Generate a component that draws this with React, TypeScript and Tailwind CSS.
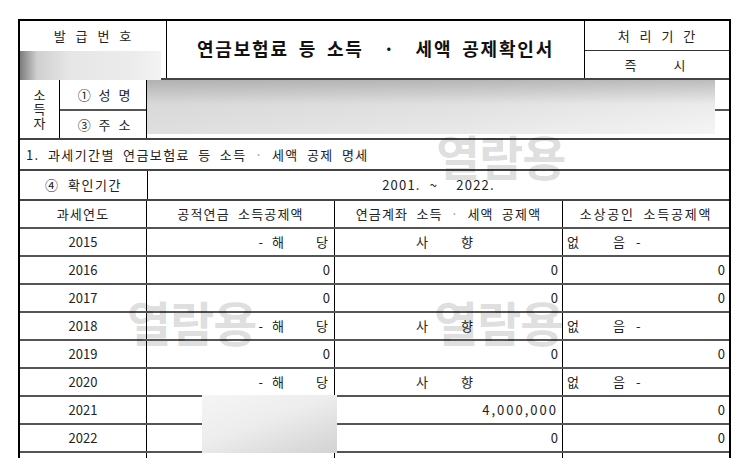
type Cell = "none" | "dang" | "hang" | "eum" | string;

const rows: { year: string; a: Cell; b: Cell; c: Cell }[] = [
  { year: "2015", a: "dang", b: "hang", c: "eum" },
  { year: "2016", a: "0", b: "0", c: "0" },
  { year: "2017", a: "0", b: "0", c: "0" },
  { year: "2018", a: "dang", b: "hang", c: "eum" },
  { year: "2019", a: "0", b: "0", c: "0" },
  { year: "2020", a: "dang", b: "hang", c: "eum" },
  { year: "2021", a: "none", b: "4,000,000", c: "0" },
  { year: "2022", a: "none", b: "0", c: "0" },
];

// "- 해 당 사 항 없 음 -" spread over the three amount columns
function Value({ v }: { v: Cell }) {
  if (v === "none") return null;
  if (v === "dang")
    return (
      <div className="flex h-full items-center justify-end pr-[6px]">
        <span>-</span>
        <span className="ml-[9px]">해</span>
        <span className="ml-[32px]">당</span>
      </div>
    );
  if (v === "hang")
    return (
      <div className="flex h-full items-center justify-center pr-[8px]">
        <span>사</span>
        <span className="ml-[33px]">향</span>
      </div>
    );
  if (v === "eum")
    return (
      <div className="flex h-full items-center pl-[4px]">
        <span>없</span>
        <span className="ml-[34px]">음</span>
        <span className="ml-[11px]">-</span>
      </div>
    );
  return (
    <div className={`flex h-full items-center justify-end pr-[4px] ${v.length > 3 ? "tracking-[2px]" : ""}`}>
      {v}
    </div>
  );
}

function Watermark({ className }: { className: string }) {
  return (
    <div
      className={`pointer-events-none absolute z-10 text-[48px] font-bold leading-none tracking-[-1px] text-[rgba(0,0,0,0.15)] ${className}`}
    >
      열람용
    </div>
  );
}

export default function App() {
  return (
    <div className="relative h-[458px] w-[743px] overflow-hidden bg-white pl-[18px] pt-[19px] font-['Noto_Sans_CJK_KR',sans-serif] text-[13px] text-[#222]">
      <div className="w-[713px] border-x-2 border-t-2 border-black">
        {/* header */}
        <div className="flex h-[59px] border-b-2 border-[#444]">
          <div className="flex w-[147px] flex-col border-r border-black">
            <div className="flex h-[30px] items-center justify-center whitespace-pre tracking-[1px] [word-spacing:5px]">발 급 번 호</div>
            <div className="flex-1" />
          </div>
          <div className="flex w-[418px] items-center justify-center whitespace-pre border-r border-black pb-[2px] text-[18px] font-bold tracking-[1.8px] text-[#111] [word-spacing:4px]">
            연금보험료 등 소득  ·  세액 공제확인서
          </div>
          <div className="flex flex-1 flex-col">
            <div className="flex h-[30px] items-center justify-center whitespace-pre border-b border-[#333] tracking-[1px] [word-spacing:5px]">처 리 기 간</div>
            <div className="flex flex-1 items-center justify-center pr-[4px]">
              <span>즉</span>
              <span className="ml-[37px]">시</span>
            </div>
          </div>
        </div>

        {/* 소득자 */}
        <div className="flex h-[60px] border-b-2 border-[#444]">
          <div className="flex w-[40px] flex-col items-center justify-center border-r border-black leading-[14px]">
            <span>소</span>
            <span>득</span>
            <span>자</span>
          </div>
          <div className="flex w-[87px] flex-col border-r border-black">
            <div className="flex h-[31px] items-center justify-center whitespace-pre border-b-2 border-[#555] pl-[3px] tracking-[1px] [word-spacing:3px]">① 성 명</div>
            <div className="flex flex-1 items-center justify-center whitespace-pre pl-[3px] tracking-[1px] [word-spacing:3px]">③ 주 소</div>
          </div>
          <div className="flex flex-1 flex-col">
            <div className="h-[31px] border-b-2 border-[#555]" />
            <div className="flex-1" />
          </div>
        </div>

        {/* section title */}
        <div className="flex h-[31px] items-center whitespace-pre border-b-2 border-[#444] pl-[6px] tracking-[1.4px] [word-spacing:4px]">
          1. 과세기간별 연금보험료 등 소득 <span className="text-[#999]">·</span> 세액 공제 명세
        </div>

        {/* 확인기간 */}
        <div className="flex h-[30px] border-b-2 border-[#444]">
          <div className="flex w-[127px] items-center justify-center whitespace-pre tracking-[1.5px] [word-spacing:4px]">④ 확인기간</div>
          <div className="flex flex-1 items-center justify-center whitespace-pre border-l border-black tracking-[1.2px] [word-spacing:5px]">2001. ~  2022.</div>
        </div>

        {/* column header */}
        <div className="flex h-[28px] border-b-2 border-[#555] tracking-[1.2px] [word-spacing:4px]">
          <div className="flex w-[127px] items-center justify-center border-r border-black">과세연도</div>
          <div className="flex w-[188px] items-center justify-center border-r border-black">공적연금 소득공제액</div>
          <div className="flex w-[228px] items-center justify-center whitespace-pre border-r border-black">
            연금계좌 소득 <span className="text-[#999]">·</span> 세액 공제액
          </div>
          <div className="flex flex-1 items-center justify-center tracking-[1.8px]">소상공인 소득공제액</div>
        </div>

        {rows.map((r) => (
          <div key={r.year} className="flex h-[28px] border-b-2 border-[#555]">
            <div className="flex w-[127px] items-center justify-center border-r border-black">{r.year}</div>
            <div className="w-[188px] border-r border-black">
              <Value v={r.a} />
            </div>
            <div className="w-[228px] border-r border-black">
              <Value v={r.b} />
            </div>
            <div className="flex-1">
              <Value v={r.c} />
            </div>
          </div>
        ))}

        <div className="flex h-[28px]">
          <div className="w-[127px] border-r border-black" />
          <div className="w-[188px] border-r border-black" />
          <div className="w-[228px] border-r border-black" />
          <div className="flex-1" />
        </div>
      </div>

      {/* redacted areas */}
      <div className="absolute left-[20px] top-[51px] h-[29px] w-[141px] bg-[linear-gradient(to_right,#7c7c7c,#cfcfcf_12%,#e6e6e6_35%,#ececec_80%,#f3f3f3)]" />
      <div className="absolute left-[147px] top-[80px] h-[54px] w-[568px] bg-[linear-gradient(to_bottom,rgba(140,140,140,0.55),rgba(200,200,200,0.25)_45%,rgba(230,230,230,0.1)),linear-gradient(to_right,#dedede,#e9e9e9_55%,#f7f7f7)]" />
      <div className="absolute left-[202px] top-[395px] h-[58px] w-[135px] bg-[linear-gradient(160deg,#f5f5f5,#ededed_45%,#d2d2d2)]" />

      <Watermark className="left-[436px] top-[131px]" />
      <Watermark className="left-[127px] top-[297px]" />
      <Watermark className="left-[434px] top-[297px]" />
    </div>
  );
}
